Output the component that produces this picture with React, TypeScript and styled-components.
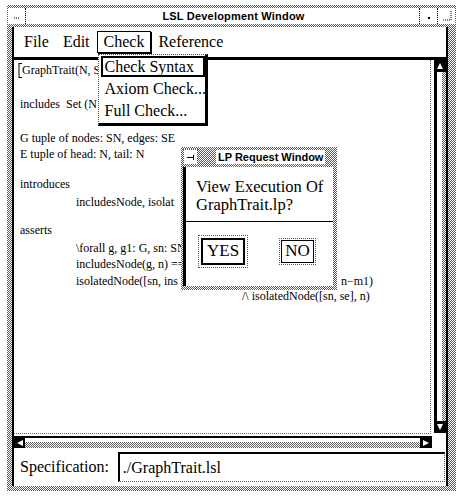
import React from "react";
import styled, { createGlobalStyle, css } from "styled-components";

const GlobalStyle = createGlobalStyle`
  html, body {
    margin: 0;
    padding: 0;
    background: #fff;
  }
  body {
    font-family: "Liberation Serif", "Times New Roman", serif;
    color: #000;
  }
`;

const dither = css`
  background-color: #fff;
  background-image: repeating-conic-gradient(#5c5c5c 0 25%, #fff 0 50%);
  background-size: 2px 2px;
`;

const Page = styled.div`
  width: 463px;
  height: 503px;
  padding: 5px 7px 0;
  box-sizing: border-box;
`;

const Window = styled.div`
  position: relative;
  width: 449px;
  height: 486px;
  box-sizing: border-box;
  padding: 3px 1px 5px;
  display: flex;
  flex-direction: column;
  ${dither}
`;

const TitleBar = styled.div`
  height: 16px;
  margin-bottom: 3px;
  background: #fff;
  display: flex;
  font: bold 11px "Liberation Sans", Arial, sans-serif;
`;

const TitleBox = styled.div<{ $side: "left" | "right" }>`
  width: 17px;
  display: flex;
  align-items: center;
  justify-content: center;
  ${(p) =>
    p.$side === "left"
      ? "border-right: 1px dotted #000;"
      : "border-left: 1px dotted #000;"}
`;

const TitleText = styled.div`
  flex: 1;
  display: flex;
  align-items: center;
  justify-content: center;
  padding-left: 22px;
  letter-spacing: 0.2px;
`;

const Frame = styled.div`
  flex: 1;
  min-height: 0;
  display: flex;
  padding: 0 7px 0 4px;
`;

const Inner = styled.div`
  flex: 1;
  display: flex;
  flex-direction: column;
  background: #fff;
  border-left: 2px solid #000;
  border-right: 2px solid #000;
`;

const MenuBar = styled.div`
  height: 30px;
  flex-shrink: 0;
  display: flex;
  align-items: center;
  padding-left: 3px;
  border-bottom: 3px solid #000;
  font-size: 16px;
`;

const MenuItem = styled.div<{ $open?: boolean }>`
  position: relative;
  height: 22px;
  box-sizing: border-box;
  padding: 0 6px;
  display: flex;
  align-items: center;
  border: 1px solid ${(p) => (p.$open ? "#000" : "transparent")};
  box-shadow: ${(p) => (p.$open ? "1px 1px 0 #000" : "none")};
`;

const Dropdown = styled.div`
  position: absolute;
  top: calc(100% + 2px);
  left: 0;
  width: 110px;
  box-sizing: border-box;
  padding: 1px 0 1px 2px;
  background: #fff;
  border-left: 1px dotted #555;
  border-top: 1px dotted #555;
  border-right: 3px solid #000;
  border-bottom: 3px solid #000;
  z-index: 2;
`;

const DropItem = styled.div<{ $active?: boolean }>`
  height: 21px;
  margin-bottom: 1px;
  box-sizing: border-box;
  padding: 0 2px;
  display: flex;
  align-items: center;
  white-space: nowrap;
  border: 2px solid ${(p) => (p.$active ? "#000" : "transparent")};
`;

const Middle = styled.div`
  height: 376px;
  flex-shrink: 0;
  display: flex;
`;

const TextPane = styled.div`
  flex: 1;
  display: flex;
  padding: 0 3px 2px 0;
`;

const Paper = styled.div`
  flex: 1;
  padding: 2px 0 0 6px;
  border-right: 1px dotted #666;
  border-bottom: 1px dotted #666;
  font-size: 12px;
  line-height: 16px;
  overflow: hidden;
`;

const Line = styled.div<{ $gap: number; $indent: number }>`
  height: 16px;
  margin-top: ${(p) => p.$gap}px;
  padding-left: ${(p) => p.$indent}px;
  white-space: pre;
  display: flex;
  align-items: center;
`;

const Covered = styled.span<{ $w: number }>`
  display: inline-block;
  width: ${(p) => p.$w}px;
  height: 16px;
  overflow: hidden;
  vertical-align: top;
`;

const Caret = styled.svg`
  width: 4px;
  height: 15px;
  margin-left: -2px;
  flex-shrink: 0;
`;

const VScroll = styled.div`
  width: 12px;
  display: flex;
  flex-direction: column;
  padding-bottom: 3px;
`;

const ArrowBox = styled.div<{ $w: number; $h: number }>`
  width: ${(p) => p.$w}px;
  height: ${(p) => p.$h}px;
  flex-shrink: 0;
  background: #000;
  display: flex;
  align-items: center;
  justify-content: center;
`;

const VTrack = styled.div`
  flex: 1;
  display: flex;
  border-left: 3px solid #000;
`;

const TrackLight = styled.div`
  flex: 1;
  background: #fff;
`;

const TrackShade = styled.div<{ $vertical?: boolean }>`
  ${(p) => (p.$vertical ? "width: 4px;" : "height: 6px;")}
  ${dither}
`;

const HRow = styled.div`
  height: 12px;
  flex-shrink: 0;
  display: flex;
`;

const HScroll = styled.div`
  width: 418px;
  display: flex;
  border-top: 2px solid #000;
`;

const HTrack = styled.div`
  flex: 1;
  display: flex;
  flex-direction: column;
`;

const SpecRow = styled.div`
  flex: 1;
  display: flex;
  align-items: center;
  padding-left: 6px;
  font-size: 16px;
`;

const SpecLabel = styled.span`
  white-space: nowrap;
`;

const SpecInput = styled.div`
  flex: 1;
  height: 30px;
  margin: 0 1px 0 9px;
  box-sizing: border-box;
  padding-left: 3px;
  display: flex;
  align-items: center;
  border-left: 2px solid #000;
  border-top: 2px solid #000;
  border-right: 1px dotted #555;
  border-bottom: 1px dotted #555;
`;

const Dialog = styled.div`
  position: absolute;
  left: 174px;
  top: 142px;
  width: 156px;
  height: 143px;
  box-sizing: border-box;
  padding: 1px 4px 4px 2px;
  display: flex;
  flex-direction: column;
  z-index: 3;
  ${dither}
`;

const DialogTitle = styled.div`
  height: 18px;
  flex-shrink: 0;
  display: flex;
  align-items: center;
  font: bold 11px "Liberation Sans", Arial, sans-serif;
`;

const DialogMenuBox = styled.div`
  width: 13px;
  height: 14px;
  background: #fff;
  border: 1px dotted #555;
  display: flex;
  align-items: center;
  justify-content: center;
`;

const DialogTitleText = styled.span`
  margin-left: 18px;
  padding: 1px 2px;
  background: #fff;
  white-space: nowrap;
`;

const DialogBody = styled.div`
  flex: 1;
  margin-top: 1px;
  display: flex;
  flex-direction: column;
  background: #fff;
  border-left: 3px solid #000;
`;

const Message = styled.div`
  height: 55px;
  flex-shrink: 0;
  box-sizing: border-box;
  padding: 11px 0 0 10px;
  border-bottom: 1px solid #000;
  font-size: 16.5px;
  line-height: 18px;
`;

const Buttons = styled.div`
  flex: 1;
  display: flex;
  align-items: center;
  padding: 0 0 6px 13px;
`;

const Button = styled.div<{ $default?: boolean }>`
  height: ${(p) => (p.$default ? 27 : 23)}px;
  box-sizing: border-box;
  padding: 0 ${(p) => (p.$default ? 4 : 3)}px;
  margin-left: ${(p) => (p.$default ? 2 : 36)}px;
  display: flex;
  align-items: center;
  font-size: 17px;
  border: ${(p) => (p.$default ? 2 : 1)}px solid #000;
  outline: 1px dotted #555;
  outline-offset: ${(p) => (p.$default ? 2 : 1)}px;
`;

type TextLine = { gap: number; indent: number; content: React.ReactNode; caret?: boolean };

const textLines: TextLine[] = [
  { gap: 0, indent: 0, caret: true, content: "GraphTrait(N, SN" },
  { gap: 18, indent: 0, content: "includes  Set (N" },
  { gap: 18, indent: 0, content: "G tuple of nodes: SN, edges: SE" },
  { gap: 0, indent: 0, content: "E tuple of head: N, tail: N" },
  { gap: 14, indent: 0, content: "introduces" },
  { gap: 2, indent: 56, content: "includesNode, isolat" },
  { gap: 12, indent: 0, content: "asserts" },
  { gap: 2, indent: 56, content: "\\forall g, g1: G, sn: SN" },
  { gap: 0, indent: 56, content: "includesNode(g, n) == n" },
  {
    gap: 1,
    indent: 56,
    content: (
      <>
        isolatedNode([sn, ins
        <Covered $w={163} />
        n−m1)
      </>
    ),
  },
  { gap: -1, indent: 222, content: "/\\ isolatedNode([sn, se], n)" },
];

const UpArrow = () => (
  <svg width="8" height="8" viewBox="0 0 8 8">
    <path d="M4 1 L7 7 L1 7 Z" fill="#fff" />
  </svg>
);

const DownArrow = () => (
  <svg width="8" height="8" viewBox="0 0 8 8">
    <path d="M1 1 L7 1 L4 7 Z" fill="#fff" />
  </svg>
);

const LeftArrow = () => (
  <svg width="8" height="8" viewBox="0 0 8 8">
    <path d="M1 4 L7 1 L7 7 Z" fill="#fff" />
  </svg>
);

const RightArrow = () => (
  <svg width="8" height="8" viewBox="0 0 8 8">
    <path d="M7 4 L1 1 L1 7 Z" fill="#fff" />
  </svg>
);

export default function App() {
  return (
    <>
      <GlobalStyle />
      <Page>
        <Window>
          <TitleBar>
            <TitleBox $side="left">
              <svg width="8" height="8" viewBox="0 0 8 8">
                <path d="M1 6 H7" stroke="#000" strokeDasharray="1 1" />
              </svg>
            </TitleBox>
            <TitleText>LSL Development Window</TitleText>
            <TitleBox $side="right">
              <svg width="8" height="8" viewBox="0 0 8 8">
                <rect x="3" y="5" width="2" height="2" fill="#000" />
              </svg>
            </TitleBox>
            <TitleBox $side="right">
              <svg width="12" height="12" viewBox="0 0 12 12">
                <path d="M10 1 V10 H2" stroke="#000" fill="none" strokeDasharray="1 1" />
              </svg>
            </TitleBox>
          </TitleBar>
          <Frame>
            <Inner>
              <MenuBar>
                <MenuItem>File</MenuItem>
                <MenuItem>Edit</MenuItem>
                <MenuItem $open>
                  Check
                  <Dropdown>
                    <DropItem $active>Check Syntax</DropItem>
                    <DropItem>Axiom Check...</DropItem>
                    <DropItem>Full Check...</DropItem>
                  </Dropdown>
                </MenuItem>
                <MenuItem>Reference</MenuItem>
              </MenuBar>
              <Middle>
                <TextPane>
                  <Paper>
                    {textLines.map((l, i) => (
                      <Line key={i} $gap={l.gap} $indent={l.indent}>
                        {l.caret && (
                          <Caret viewBox="0 0 4 15">
                            <path d="M1 0 V15 M1 0.5 H4 M1 14.5 H4" stroke="#000" />
                          </Caret>
                        )}
                        <span>{l.content}</span>
                      </Line>
                    ))}
                  </Paper>
                </TextPane>
                <VScroll>
                  <ArrowBox $w={12} $h={12}>
                    <UpArrow />
                  </ArrowBox>
                  <VTrack>
                    <TrackLight />
                    <TrackShade $vertical />
                  </VTrack>
                  <ArrowBox $w={12} $h={12}>
                    <DownArrow />
                  </ArrowBox>
                </VScroll>
              </Middle>
              <HRow>
                <HScroll>
                  <ArrowBox $w={11} $h={10}>
                    <LeftArrow />
                  </ArrowBox>
                  <HTrack>
                    <TrackLight />
                    <TrackShade />
                  </HTrack>
                  <ArrowBox $w={12} $h={10}>
                    <RightArrow />
                  </ArrowBox>
                </HScroll>
              </HRow>
              <SpecRow>
                <SpecLabel>Specification:</SpecLabel>
                <SpecInput>./GraphTrait.lsl</SpecInput>
              </SpecRow>
            </Inner>
          </Frame>
          <Dialog>
            <DialogTitle>
              <DialogMenuBox>
                <svg width="9" height="9" viewBox="0 0 9 9">
                  <path d="M1 4.5 H7 M7.5 2 V7" stroke="#000" />
                </svg>
              </DialogMenuBox>
              <DialogTitleText>LP Request Window</DialogTitleText>
            </DialogTitle>
            <DialogBody>
              <Message>
                View Execution Of
                <br />
                GraphTrait.lp?
              </Message>
              <Buttons>
                <Button $default>YES</Button>
                <Button>NO</Button>
              </Buttons>
            </DialogBody>
          </Dialog>
        </Window>
      </Page>
    </>
  );
}
